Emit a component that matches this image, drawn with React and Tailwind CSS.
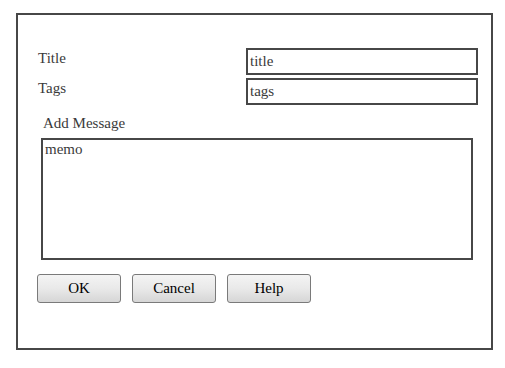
import React from 'react';

const font = { fontFamily: '"Liberation Serif", "Times New Roman", serif' };

const Btn = ({ children }) => (
  <button
    type="button"
    className="w-[84px] h-[29px] rounded-[3px] border border-[#7a7a7a] bg-gradient-to-b from-[#f4f4f4] via-[#e9e9e9] to-[#d6d6d6] text-[15px] text-black leading-none"
  >
    {children}
  </button>
);

export default function App() {
  return (
    <div className="bg-white w-[505px] h-[368px] pt-[13px] pl-[16px] leading-[17px]" style={font}>
      <div className="w-[477px] h-[337px] border-2 border-[#474747] flex flex-col pt-[33px]">
        {/* Title / Tags */}
        <div className="flex items-start">
          <label className="ml-[20px] w-[208px] mt-[2px] text-[15px] leading-[17px] text-[#3a3a3a]">Title</label>
          <input
            defaultValue="title"
            className="w-[232px] h-[27px] border-2 border-[#474747] px-[2px] text-[15px] text-[#3a3a3a] outline-none"
          />
        </div>
        <div className="flex items-start mt-[3px]">
          <label className="ml-[20px] w-[208px] mt-[2px] text-[15px] leading-[17px] text-[#3a3a3a]">Tags</label>
          <input
            defaultValue="tags"
            className="w-[232px] h-[27px] border-2 border-[#474747] px-[2px] text-[15px] text-[#3a3a3a] outline-none"
          />
        </div>

        {/* Message */}
        <div className="ml-[25px] mt-[10px] text-[15px] leading-[17px] text-[#3a3a3a]">Add Message</div>
        <textarea
          defaultValue="memo"
          className="ml-[23px] mt-[6px] w-[432px] h-[122px] border-2 border-[#474747] px-[2px] pt-[1px] text-[15px] leading-[17px] text-[#3a3a3a] resize-none outline-none"
        />

        {/* Buttons */}
        <div className="flex gap-[11px] ml-[19px] mt-[14px]">
          <Btn>OK</Btn>
          <Btn>Cancel</Btn>
          <Btn>Help</Btn>
        </div>
      </div>
    </div>
  );
}
